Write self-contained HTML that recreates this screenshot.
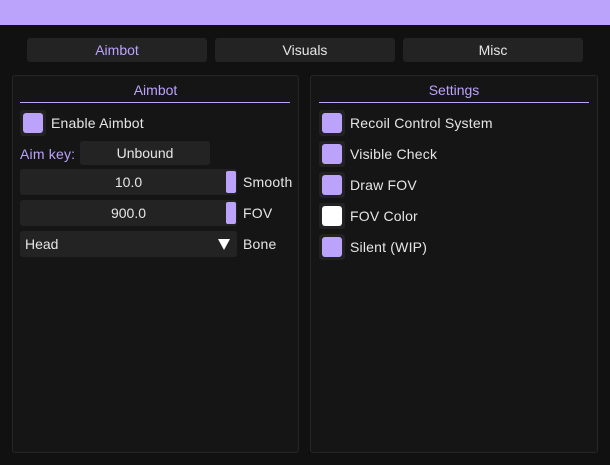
<!DOCTYPE html><html><head><style>
body{margin:0;width:610px;height:465px;background:#111;font-family:"Liberation Sans",sans-serif;font-size:14px;color:#e6e6e6;position:relative;overflow:hidden}
div{position:absolute;box-sizing:border-box}
.t{background:#232323;border-radius:3px;text-align:center;line-height:24px;top:38px;height:24px;width:180px}
.p{border:1px solid #262626;background:#151515;border-radius:3px;top:75px;height:378px}
.h{color:#bba3fc;text-align:center;top:6px;line-height:16px}
.ln{height:1px;background:#bba3fc;top:26px}
.cb{width:26px;height:26px;background:#222;border-radius:3px}
.cb::after{content:"";position:absolute;left:3px;top:3px;width:20px;height:20px;background:#bba3fc;border-radius:3px}
.cb.w::after{background:#fff}
.l{line-height:26px;white-space:nowrap;letter-spacing:0.2px}
.f{background:#232323;border-radius:3px;height:26px;line-height:26px;text-align:center}
.g{width:10px;height:22px;top:2px;background:#bba3fc;border-radius:2px}
</style></head><body>
<div style="left:0;top:0;width:610px;height:25px;background:#bba3fc"></div>
<div class="t" style="left:27px;color:#bba3fc">Aimbot</div>
<div class="t" style="left:215px">Visuals</div>
<div class="t" style="left:403px">Misc</div>
<div class="p" style="left:12px;width:287px">
 <div class="h" style="left:0;width:285px">Aimbot</div>
 <div class="ln" style="left:7px;width:270px"></div>
 <div class="cb" style="left:7px;top:34px"></div><div class="l" style="left:38px;top:34px">Enable Aimbot</div>
 <div class="l" style="left:7px;top:65px;color:#bba3fc">Aim key:</div>
 <div class="f" style="left:67px;top:65px;width:130px;height:24px;line-height:24px">Unbound</div>
 <div class="f" style="left:7px;top:93px;width:217px">10.0<div class="g" style="left:206px"></div></div>
 <div class="l" style="left:230px;top:93px">Smooth</div>
 <div class="f" style="left:7px;top:124px;width:217px">900.0<div class="g" style="left:206px"></div></div>
 <div class="l" style="left:230px;top:124px">FOV</div>
 <div class="f" style="left:7px;top:155px;width:217px;text-align:left;padding-left:5px">Head<svg style="position:absolute;right:7px;top:8px" width="12" height="11"><path d="M0 0H12L6 11Z" fill="#fff"/></svg></div>
 <div class="l" style="left:230px;top:155px">Bone</div>
</div>
<div class="p" style="left:310px;width:288px">
 <div class="h" style="left:0;width:286px">Settings</div>
 <div class="ln" style="left:8px;width:270px"></div>
 <div class="cb" style="left:8px;top:34px"></div><div class="l" style="left:39px;top:34px">Recoil Control System</div>
 <div class="cb" style="left:8px;top:65px"></div><div class="l" style="left:39px;top:65px">Visible Check</div>
 <div class="cb" style="left:8px;top:96px"></div><div class="l" style="left:39px;top:96px">Draw FOV</div>
 <div class="cb w" style="left:8px;top:127px"></div><div class="l" style="left:39px;top:127px">FOV Color</div>
 <div class="cb" style="left:8px;top:158px"></div><div class="l" style="left:39px;top:158px">Silent (WIP)</div>
</div>
</body></html>
